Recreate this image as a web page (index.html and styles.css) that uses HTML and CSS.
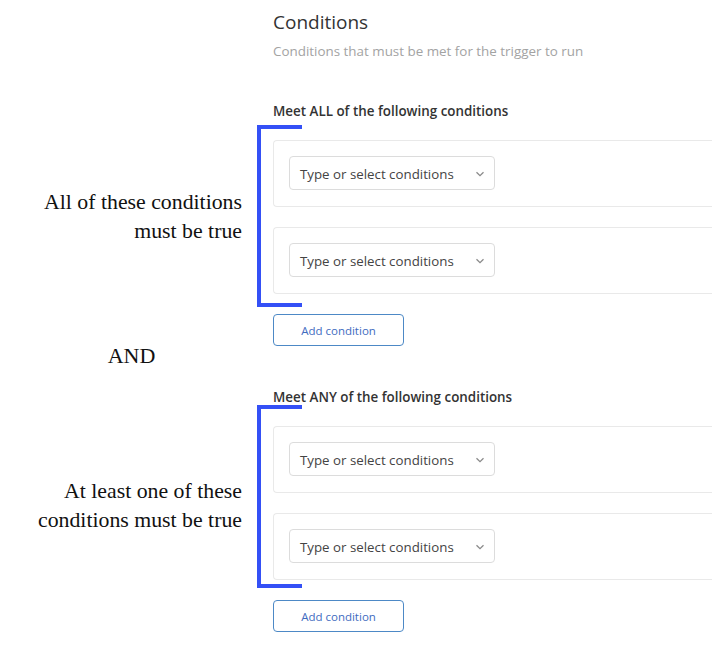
FILE: index.html
```html
<!DOCTYPE html>
<html lang="en">
<head>
  <meta charset="UTF-8">
  <title>Conditions</title>
  <link rel="stylesheet" href="styles.css">
</head>
<body>
  <div class="page">
    <div class="intro">
      <h1>Conditions</h1>
      <p class="sub">Conditions that must be met for the trigger to run</p>
    </div>

    <h2 class="group-title">Meet ALL of the following conditions</h2>
    <p class="note">All of these conditions<br>must be true</p>
    <div class="cards bracket-all">
      <div class="card">
        <div class="select">Type or select conditions
          <svg width="10" height="6" viewBox="0 0 10 6"><path d="M1.5 1.2 5 4.6 8.5 1.2" fill="none" stroke="#8a8a8a" stroke-width="1.3"/></svg>
        </div>
      </div>
      <div class="card">
        <div class="select">Type or select conditions
          <svg width="10" height="6" viewBox="0 0 10 6"><path d="M1.5 1.2 5 4.6 8.5 1.2" fill="none" stroke="#8a8a8a" stroke-width="1.3"/></svg>
        </div>
      </div>
    </div>
    <div class="actions"><button>Add condition</button></div>

    <p class="and">AND</p>

    <h2 class="group-title">Meet ANY of the following conditions</h2>
    <p class="note note-any">At least one of these<br>conditions must be true</p>
    <div class="cards bracket-any">
      <div class="card">
        <div class="select">Type or select conditions
          <svg width="10" height="6" viewBox="0 0 10 6"><path d="M1.5 1.2 5 4.6 8.5 1.2" fill="none" stroke="#8a8a8a" stroke-width="1.3"/></svg>
        </div>
      </div>
      <div class="card">
        <div class="select">Type or select conditions
          <svg width="10" height="6" viewBox="0 0 10 6"><path d="M1.5 1.2 5 4.6 8.5 1.2" fill="none" stroke="#8a8a8a" stroke-width="1.3"/></svg>
        </div>
      </div>
    </div>
    <div class="actions"><button>Add condition</button></div>
  </div>
</body>
</html>
```

FILE: styles.css
```css
body {
  margin: 0;
  background: #fff;
  overflow: hidden;
  font-family: "Open Sans", "Noto Sans", sans-serif;
  color: #333;
}
.page {
  display: grid;
  grid-template-columns: 257px 455px;
  padding-top: 9px;
}
.intro,
.group-title,
.cards,
.actions {
  grid-column: 2;
  padding-left: 16px;
}
h1 {
  margin: 0;
  font-size: 19px;
  font-weight: 400;
  line-height: 26px;
  color: #333;
}
.sub {
  margin: 7px 0 0;
  font-size: 13.4px;
  line-height: 18px;
  color: #a3a3a3;
}
.group-title {
  margin: 42px 0 0;
  font-size: 13.4px;
  font-weight: 600;
  line-height: 18px;
  color: #333;
}
.note {
  grid-column: 1;
  margin: 0;
  padding: 20px 15px 0 0;
  align-self: center;
  text-align: right;
  font-family: "Liberation Serif", serif;
  font-size: 21.8px;
  line-height: 29px;
  color: #111;
}
.note-any {
  padding-top: 26px;
}
.cards {
  position: relative;
  display: flex;
  flex-direction: column;
  gap: 20px;
  padding-top: 20px;
}
.card {
  border: 1px solid #e9e9e9;
  border-right: none;
  border-radius: 4px 0 0 4px;
  padding: 15px 15px 16px;
}
.cards::before {
  content: "";
  position: absolute;
  left: 0;
  width: 41px;
  border: 4px solid #3450f6;
  border-right: none;
}
.bracket-all::before {
  top: 5px;
  bottom: -13px;
}
.bracket-any::before {
  top: -1px;
  bottom: -8px;
}
.select {
  width: 206px;
  height: 34px;
  box-sizing: border-box;
  display: flex;
  align-items: center;
  justify-content: space-between;
  padding: 1px 9px 0 10px;
  border: 1px solid #dcdcdc;
  border-radius: 4px;
  font-size: 13.3px;
  color: #444;
}
.actions {
  padding-top: 20px;
}
button {
  width: 131px;
  height: 32px;
  background: #fff;
  border: 1px solid #4d89c6;
  border-radius: 4px;
  font-family: inherit;
  font-size: 11.5px;
  color: #3f6cbf;
  cursor: pointer;
}
.and {
  grid-column: 1;
  margin: 0 0 2px;
  padding-left: 6px;
  text-align: center;
  font-family: "Liberation Serif", serif;
  font-size: 22px;
  line-height: 20px;
  color: #111;
}
```
